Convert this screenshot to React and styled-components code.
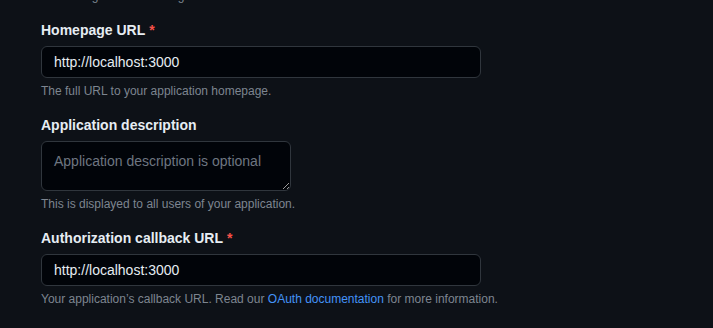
import styled, { createGlobalStyle } from 'styled-components';

const GlobalStyle = createGlobalStyle`
  html, body {
    margin: 0;
    padding: 0;
    background-color: #0d1117;
  }
  body {
    font-family: "Liberation Sans", Arial, sans-serif;
    color: #e6edf3;
    overflow: hidden;
  }
`;

const Page = styled.div`
  width: 713px;
  height: 328px;
  background-color: #0d1117;
  padding-left: 41px;
  box-sizing: border-box;
  overflow: hidden;
`;

// last line of the previous field's hint, scrolled mostly out of view
const TopNote = styled.p`
  margin: -13px 0 0 0;
  font-size: 12px;
  line-height: 18px;
  color: #7d8590;
`;

const FormGroup = styled.div`
  margin-top: 15px;
`;

const Label = styled.label`
  display: block;
  font-size: 14px;
  line-height: 20px;
  font-weight: 700;
  color: #e6edf3;
  margin-bottom: 6px;
`;

const Required = styled.span`
  color: #f85149;
  margin-left: 4px;
`;

const TextInput = styled.input`
  display: block;
  box-sizing: border-box;
  width: 440px;
  height: 32px;
  padding: 5px 12px;
  font-family: inherit;
  font-size: 14px;
  line-height: 20px;
  color: #e6edf3;
  background-color: #010409;
  border: 1px solid #30363d;
  border-radius: 6px;
  outline: none;
`;

const TextArea = styled.textarea`
  display: block;
  box-sizing: border-box;
  width: 250px;
  height: 50px;
  margin-top: 1px;
  padding: 9px 12px;
  font-family: inherit;
  font-size: 14px;
  line-height: 20px;
  color: #e6edf3;
  background-color: #010409;
  border: 1px solid #30363d;
  border-radius: 6px;
  outline: none;
  resize: vertical;

  &::placeholder {
    color: #6e7681;
  }
`;

const Note = styled.p`
  margin: 4px 0 0 0;
  font-size: 12px;
  line-height: 18px;
  color: #7d8590;
`;

const Link = styled.a`
  color: #4493f8;
  text-decoration: none;
`;

export default function App() {
  return (
    <>
      <GlobalStyle />
      <Page>
        <TopNote>Something users will recognize and trust.</TopNote>

        <FormGroup>
          <Label>
            Homepage URL<Required>*</Required>
          </Label>
          <TextInput defaultValue="http://localhost:3000" />
          <Note>The full URL to your application homepage.</Note>
        </FormGroup>

        <FormGroup>
          <Label>Application description</Label>
          <TextArea placeholder="Application description is optional" />
          <Note>This is displayed to all users of your application.</Note>
        </FormGroup>

        <FormGroup>
          <Label>
            Authorization callback URL<Required>*</Required>
          </Label>
          <TextInput defaultValue="http://localhost:3000" />
          <Note>
            Your application’s callback URL. Read our{' '}
            <Link href="#">OAuth documentation</Link> for more information.
          </Note>
        </FormGroup>
      </Page>
    </>
  );
}
